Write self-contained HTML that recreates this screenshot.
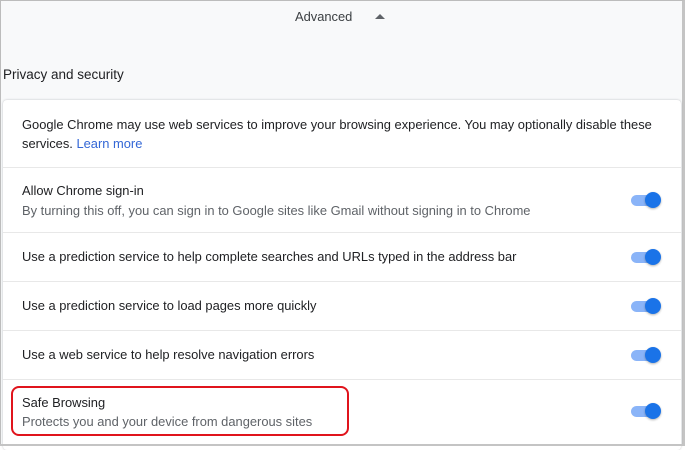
<!DOCTYPE html>
<html><head><style>
*{margin:0;padding:0;box-sizing:border-box}
body{width:685px;height:446px;overflow:hidden;background:#fff;font-family:"Liberation Sans",Arial,sans-serif;position:relative}
#win{position:absolute;left:0;top:0;width:685px;height:446px;border:1px solid #bcbcbc;border-right:3px solid #c4c4c4;background:#f8f9fa}
.t{position:absolute;font-size:12.9px;color:#202124;white-space:nowrap}
.s{color:#5f6368}
#card{position:absolute;left:3px;top:100px;width:678px;height:350px;background:#fff;border-radius:4px;box-shadow:0 0 2px rgba(60,64,67,.3)}
.hr{position:absolute;left:3px;width:678px;height:1px;background:#e8e8e8}
.tg{position:absolute;left:631px;width:30px;height:16px}
.tg .tr{position:absolute;left:0;top:3px;width:26px;height:11px;border-radius:6px;background:#8ab4f8}
.tg .th{position:absolute;left:14px;top:0;width:16px;height:16px;border-radius:50%;background:#1a73e8;box-shadow:0 1px 2px rgba(0,0,0,.3)}
#red{position:absolute;left:11px;top:386px;width:338px;height:50px;border:2px solid #e0141c;border-radius:8px}
</style></head><body>
<div id="win"></div>
<div class="t" style="left:295px;top:9px;color:#3c4043">Advanced</div>
<div style="position:absolute;left:375px;top:14px;width:0;height:0;border-left:5px solid transparent;border-right:5px solid transparent;border-bottom:5px solid #5f6368"></div>
<div class="t" style="left:3px;top:67px;font-size:13.5px">Privacy and security</div>
<div id="card"></div>
<div class="t" style="left:22px;top:117px">Google Chrome may use web services to improve your browsing experience. You may optionally disable these</div>
<div class="t" style="left:22px;top:136px">services. <span style="color:#3367d6">Learn more</span></div>
<div class="hr" style="top:167px"></div>
<div class="t" style="left:22px;top:183px">Allow Chrome sign-in</div>
<div class="t s" style="left:22px;top:203px">By turning this off, you can sign in to Google sites like Gmail without signing in to Chrome</div>
<div class="tg" style="top:192px"><div class="tr"></div><div class="th"></div></div>
<div class="hr" style="top:232px"></div>
<div class="t" style="left:22px;top:249px">Use a prediction service to help complete searches and URLs typed in the address bar</div>
<div class="tg" style="top:249px"><div class="tr"></div><div class="th"></div></div>
<div class="hr" style="top:281px"></div>
<div class="t" style="left:22px;top:298px">Use a prediction service to load pages more quickly</div>
<div class="tg" style="top:298px"><div class="tr"></div><div class="th"></div></div>
<div class="hr" style="top:330px"></div>
<div class="t" style="left:22px;top:347px">Use a web service to help resolve navigation errors</div>
<div class="tg" style="top:347px"><div class="tr"></div><div class="th"></div></div>
<div class="hr" style="top:379px"></div>
<div class="t" style="left:22px;top:395px">Safe Browsing</div>
<div class="t s" style="left:22px;top:414px">Protects you and your device from dangerous sites</div>
<div class="tg" style="top:403px"><div class="tr"></div><div class="th"></div></div>
<div id="red"></div>
<div style="position:absolute;left:0;top:444px;width:685px;height:2px;background:#c4c4c4"></div>
</body></html>
